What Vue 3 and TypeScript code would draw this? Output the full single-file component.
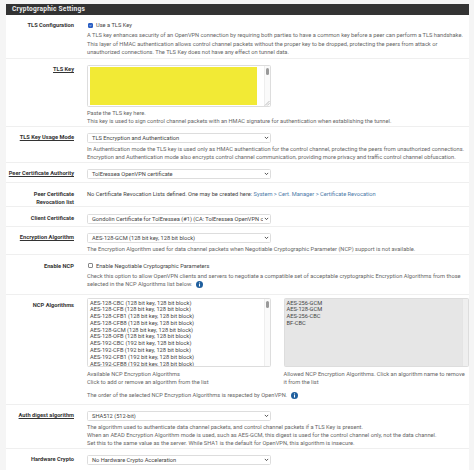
<script setup lang="ts">
const availableAlgorithms: string[] = [
  'AES-128-CBC (128 bit key, 128 bit block)',
  'AES-128-CFB (128 bit key, 128 bit block)',
  'AES-128-CFB1 (128 bit key, 128 bit block)',
  'AES-128-CFB8 (128 bit key, 128 bit block)',
  'AES-128-GCM (128 bit key, 128 bit block)',
  'AES-128-OFB (128 bit key, 128 bit block)',
  'AES-192-CBC (192 bit key, 128 bit block)',
  'AES-192-CFB (192 bit key, 128 bit block)',
  'AES-192-CFB1 (192 bit key, 128 bit block)',
  'AES-192-CFB8 (192 bit key, 128 bit block)',
]
const allowedAlgorithms: string[] = ['AES-256-GCM', 'AES-128-GCM', 'AES-256-CBC', 'BF-CBC']
</script>

<template>
  <div class="page">
    <section class="panel">
      <h2 class="heading">Cryptographic Settings</h2>

      <div class="row r1">
        <div class="label">TLS Configuration</div>
        <div class="body">
          <label class="check"><input type="checkbox" checked />Use a TLS Key</label>
          <p class="help first">A TLS key enhances security of an OpenVPN connection by requiring both parties to have a common key before a peer can perform a TLS handshake.<br />This layer of HMAC authentication allows control channel packets without the proper key to be dropped, protecting the peers from attack or<br />unauthorized connections. The TLS Key does not have any effect on tunnel data.</p>
        </div>
      </div>

      <div class="row r2">
        <div class="label req">TLS Key</div>
        <div class="body">
          <div class="keybox">
            <div class="yellow"></div>
            <div class="track"><span class="thumb"></span></div>
            <svg class="grip" viewBox="0 0 6 6"><path d="M5.5 1 1 5.5M5.5 3.2 3.2 5.5" stroke="#999" stroke-width=".6" fill="none" /></svg>
          </div>
          <p class="help after-select">Paste the TLS key here.<br />This key is used to sign control channel packets with an HMAC signature for authentication when establishing the tunnel.</p>
        </div>
      </div>

      <div class="row r3">
        <div class="label req">TLS Key Usage Mode</div>
        <div class="body">
          <div class="select">TLS Encryption and Authentication<svg class="chev" viewBox="0 0 6 4"><path d="M1 1l2 2 2-2" /></svg></div>
          <p class="help after-select">In Authentication mode the TLS key is used only as HMAC authentication for the control channel, protecting the peers from unauthorized connections.<br />Encryption and Authentication mode also encrypts control channel communication, providing more privacy and traffic control channel obfuscation.</p>
        </div>
      </div>

      <div class="row r4">
        <div class="label req">Peer Certificate Authority</div>
        <div class="body">
          <div class="select">TolEressea OpenVPN certificate<svg class="chev" viewBox="0 0 6 4"><path d="M1 1l2 2 2-2" /></svg></div>
        </div>
      </div>

      <div class="row r5">
        <div class="label">Peer Certificate<br />Revocation list</div>
        <div class="body">
          <p class="help dark">No Certificate Revocation Lists defined. One may be created here: <a class="link">System &gt; Cert. Manager &gt; Certificate Revocation</a></p>
        </div>
      </div>

      <div class="row r6">
        <div class="label">Client Certificate</div>
        <div class="body">
          <div class="select">Gondolin Certificate for TolEressea (#1) (CA: TolEressea OpenVPN c<svg class="chev" viewBox="0 0 6 4"><path d="M1 1l2 2 2-2" /></svg></div>
        </div>
      </div>

      <div class="row r7">
        <div class="label req">Encryption Algorithm</div>
        <div class="body">
          <div class="select">AES-128-GCM (128 bit key, 128 bit block)<svg class="chev" viewBox="0 0 6 4"><path d="M1 1l2 2 2-2" /></svg></div>
          <p class="help after-select">The Encryption Algorithm used for data channel packets when Negotiable Cryptographic Parameter (NCP) support is not available.</p>
        </div>
      </div>

      <div class="row r8">
        <div class="label">Enable NCP</div>
        <div class="body">
          <label class="check"><input type="checkbox" />Enable Negotiable Cryptographic Parameters</label>
          <p class="help first">Check this option to allow OpenVPN clients and servers to negotiate a compatible set of acceptable cryptographic Encryption Algorithms from those<br />selected in the NCP Algorithms list below.<svg class="info" viewBox="0 0 16 16"><circle cx="8" cy="8" r="8" /><rect x="6.8" y="7" width="2.4" height="5.5" fill="#fff" /><rect x="6.8" y="3.4" width="2.4" height="2.2" fill="#fff" /></svg></p>
        </div>
      </div>

      <div class="row r9">
        <div class="label ncp">NCP Algorithms</div>
        <div class="body">
          <div class="lists">
            <div>
              <div class="list">
                <div v-for="a in availableAlgorithms" :key="a" class="opt">{{ a }}</div>
                <div class="track"><span class="thumb"></span></div>
              </div>
              <p class="help after-list">Available NCP Encryption Algorithms<br />Click to add or remove an algorithm from the list</p>
            </div>
            <div>
              <div class="list allowed">
                <div v-for="a in allowedAlgorithms" :key="a" class="opt">{{ a }}</div>
                <div class="track plain"></div>
              </div>
              <p class="help after-list">Allowed NCP Encryption Algorithms. Click an algorithm name to remove<br />it from the list</p>
            </div>
          </div>
          <p class="help order">The order of the selected NCP Encryption Algorithms is respected by OpenVPN.<svg class="info" viewBox="0 0 16 16"><circle cx="8" cy="8" r="8" /><rect x="6.8" y="7" width="2.4" height="5.5" fill="#fff" /><rect x="6.8" y="3.4" width="2.4" height="2.2" fill="#fff" /></svg></p>
        </div>
      </div>

      <div class="row r10">
        <div class="label req">Auth digest algorithm</div>
        <div class="body">
          <div class="select">SHA512 (512-bit)<svg class="chev" viewBox="0 0 6 4"><path d="M1 1l2 2 2-2" /></svg></div>
          <p class="help after-select">The algorithm used to authenticate data channel packets, and control channel packets if a TLS Key is present.<br />When an AEAD Encryption Algorithm mode is used, such as AES-GCM, this digest is used for the control channel only, not the data channel.<br />Set this to the same value as the server. While SHA1 is the default for OpenVPN, this algorithm is insecure.</p>
        </div>
      </div>

      <div class="row r11">
        <div class="label">Hardware Crypto</div>
        <div class="body">
          <div class="select">No Hardware Crypto Acceleration<svg class="chev" viewBox="0 0 6 4"><path d="M1 1l2 2 2-2" /></svg></div>
        </div>
      </div>
    </section>
  </div>
</template>

<style>
html, body { margin: 0; background: #f5f5f5; overflow: hidden; }
</style>

<style scoped>
.page {
  width: 474px;
  height: 470px;
  overflow: hidden;
  padding: 4px 5px 0 6px;
  box-sizing: border-box;
  font-family: Roboto, "Liberation Sans", sans-serif;
  font-size: 5.7px;
  line-height: 8px;
  color: #555;
}
.panel { background: #fff; }
.heading {
  margin: 0;
  height: 11px;
  padding-left: 6px;
  background: #333;
  color: #eee;
  font-size: 6.6px;
  letter-spacing: 0.22px;
  line-height: 11px;
  font-weight: 700;
}
.row {
  display: grid;
  grid-template-columns: 68px 1fr;
  column-gap: 13px;
  box-sizing: border-box;
  border-bottom: 1px solid #efefef;
}
.r1 { height: 44px; padding-top: 6px; }
.r2 { height: 68px; padding-top: 6px; }
.r3 { height: 36px; padding-top: 6px; }
.r4 { height: 20px; padding-top: 6px; }
.r5 { height: 24px; padding-top: 6.5px; }
.r6 { height: 20px; padding-top: 7px; }
.r7 { height: 28px; padding-top: 6.3px; }
.r8 { height: 40px; padding-top: 6.5px; }
.r9 { height: 110px; padding-top: 3px; }
.r10 { height: 44px; padding-top: 6px; }
.r11 { height: 24px; padding-top: 6px; border-bottom: 0; }
.label {
  text-align: right;
  font-weight: 700;
  color: #333;
  line-height: 8px;
}
.req { text-decoration: underline; }
.ncp { padding-top: 3px; }
.body { min-width: 0; }
.check {
  display: flex;
  align-items: center;
  height: 8px;
  color: #444;
}
.check input {
  appearance: none;
  box-sizing: border-box;
  width: 5px;
  height: 5px;
  margin: 0 3.5px 0 0.5px;
  background: #fff;
  border: 0.5px solid #888;
  border-radius: 1px;
}
.check input:checked {
  border-color: #2b5fc4;
  background: #2b5fc4 url("data:image/svg+xml,%3Csvg xmlns='http://www.w3.org/2000/svg' viewBox='0 0 10 10'%3E%3Cpath d='M2 5.2 4.2 7.5 8 2.8' fill='none' stroke='%23fff' stroke-width='1.8'/%3E%3C/svg%3E") center / 100% 100% no-repeat;
}
.help { margin: 0; white-space: nowrap; color: #666; line-height: 8.2px; }
.help.dark { color: #444; }
.first { margin-top: 2.3px; }
.after-select { margin-top: 1.7px; }
.link { color: #4b7aa8; }
.keybox {
  position: relative;
  width: 184px;
  height: 42px;
  box-sizing: border-box;
  border: 1px solid #ddd;
  border-radius: 1.5px;
  background: #fff;
}
.yellow {
  position: absolute;
  left: 1.5px;
  top: 1px;
  width: 167px;
  height: 38px;
  background: #f2ea35;
}
.track {
  position: absolute;
  right: 0;
  top: 0;
  width: 6px;
  height: 100%;
  background: #fafafa;
  border-left: 1px solid #eee;
  box-sizing: border-box;
}
.track.plain { background: #efefef; border-left-color: #e4e4e4; }
.thumb {
  display: block;
  width: 3px;
  height: 7px;
  margin: 2px 0 0 1px;
  background: #999;
  border-radius: 1.5px;
}
.grip {
  position: absolute;
  right: 0;
  bottom: 0;
  width: 6px;
  height: 6px;
}
.select {
  position: relative;
  width: 184px;
  height: 10px;
  box-sizing: border-box;
  border: 1px solid #ddd;
  border-radius: 1.5px;
  padding-left: 4px;
  line-height: 8px;
  color: #444;
  background: #fff;
  white-space: nowrap;
  overflow: hidden;
}
.chev {
  position: absolute;
  right: 1px;
  top: 2px;
  width: 5px;
  height: 3.5px;
  background: #fff;
  padding-left: 1px;
  fill: none;
  stroke: #333;
  stroke-width: 1;
}
.lists { display: grid; grid-template-columns: 184px 185px; column-gap: 12.5px; }
.list {
  position: relative;
  height: 69px;
  box-sizing: border-box;
  border: 1px solid #ddd;
  border-radius: 1.5px;
  padding: 0.5px 2px 0;
  overflow: hidden;
  background: #fff;
  color: #444;
}
.allowed { background: #e6e6e6; }
.opt { height: 6.8px; line-height: 6.8px; white-space: nowrap; }
.after-list { margin-top: 2.6px; line-height: 8px; }
.order { margin-top: 5.5px; }
.info {
  width: 7px;
  height: 7px;
  margin-left: 4px;
  vertical-align: -1.5px;
  fill: #1f5f9e;
}
</style>
